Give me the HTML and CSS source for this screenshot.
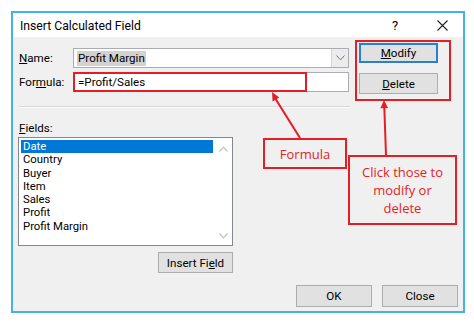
FILE: index.html
```html
<!DOCTYPE html>
<html>
<head>
<meta charset="utf-8">
<link rel="stylesheet" href="styles.css">
</head>
<body>
<div class="page">
  <div class="dialog">
    <div class="titlebar">
      <span class="title">Insert Calculated Field</span>
      <span class="help">?</span>
      <span class="close">
        <svg width="11" height="11" viewBox="0 0 11 11"><path d="M0.5 0.5 L10.5 10.5 M10.5 0.5 L0.5 10.5" stroke="#222" stroke-width="1.1" fill="none"/></svg>
      </span>
    </div>
    <div class="body">
      <div class="top">
        <div class="form">
          <div class="row">
            <span class="lbl"><u>N</u>ame:</span>
            <div class="combo">
              <span class="sel">Profit Margin</span>
              <span class="drop"><svg width="9" height="6" viewBox="0 0 9 6"><path d="M0.5 0.5 L4.5 4.8 L8.5 0.5" stroke="#777" stroke-width="1" fill="none"/></svg></span>
            </div>
          </div>
          <div class="row">
            <span class="lbl">For<u>m</u>ula:</span>
            <div class="input">=Profit/Sales</div>
          </div>
        </div>
        <div class="side">
          <button class="btn modify"><u>M</u>odify</button>
          <button class="btn delete"><u>D</u>elete</button>
        </div>
      </div>
      <div class="sep"></div>
      <div class="fields-label"><u>F</u>ields:</div>
      <div class="listbox">
        <ul class="list">
          <li class="active">Date</li>
          <li>Country</li>
          <li>Buyer</li>
          <li>Item</li>
          <li>Sales</li>
          <li>Profit</li>
          <li>Profit Margin</li>
        </ul>
        <div class="scroll">
          <svg width="9" height="6" viewBox="0 0 9 6"><path d="M0.5 5.5 L4.5 1.2 L8.5 5.5" stroke="#c2c2c2" stroke-width="1.2" fill="none"/></svg>
          <svg width="9" height="6" viewBox="0 0 9 6"><path d="M0.5 0.5 L4.5 4.8 L8.5 0.5" stroke="#c2c2c2" stroke-width="1.2" fill="none"/></svg>
        </div>
      </div>
      <div class="insert-row">
        <button class="btn insert">Insert Fi<u>e</u>ld</button>
      </div>
      <div class="footer">
        <button class="btn foot">OK</button>
        <button class="btn foot">Close</button>
      </div>
    </div>
  </div>

  <div class="hl hl-formula"></div>
  <div class="hl hl-buttons"></div>
  <div class="callout callout-formula">Formula</div>
  <div class="callout callout-click">Click those to<br>modify or<br>delete</div>
  <svg class="arrows" width="474" height="324" viewBox="0 0 474 324">
    <line x1="300" y1="138" x2="275" y2="98" stroke="#e41e26" stroke-width="2"/>
    <polygon points="272,92 279.2,97.4 272.6,101.4" fill="#e41e26"/>
    <line x1="386" y1="155" x2="384.3" y2="107" stroke="#e41e26" stroke-width="2"/>
    <polygon points="384,100 388,108 380.4,108.2" fill="#e41e26"/>
  </svg>
</div>
</body>
</html>
```
FILE: styles.css
```css
* { box-sizing: border-box; }
html, body { margin: 0; padding: 0; background: #fff; }
.page {
  position: relative;
  width: 474px;
  height: 324px;
  padding: 11px 0 0 11px;
  font-family: Roboto, "Open Sans", sans-serif;
  font-size: 11.6px;
  color: #000;
}
.dialog {
  width: 454px;
  height: 302px;
  border: 2px solid #45b2e6;
  background: #f0f0f0;
  display: flex;
  flex-direction: column;
}
.titlebar {
  height: 24px;
  background: #fff;
  display: flex;
  align-items: center;
  padding-left: 7px;
}
.title { flex: 1; font-size: 12.2px; padding-top: 1px; }
.help { width: 20px; text-align: center; font-size: 13px; margin-right: 16px; padding-top: 1px; }
.close { width: 42px; display: flex; justify-content: center; padding-top: 1px; }

.body { flex: 1; padding: 6px 5px 0 6px; }
.top { display: flex; gap: 10px; height: 51px; }
.form { width: 330px; padding-top: 5px; display: flex; flex-direction: column; gap: 4px; }
.row { display: flex; align-items: center; height: 20px; }
.lbl { width: 54px; }
.combo {
  width: 276px; height: 20px;
  border: 1px solid #abadb3; background: #fff;
  display: flex; align-items: center; padding-left: 3px;
}
.sel { background: #d2d2d2; padding: 0 1px; line-height: 15px; }
.drop {
  margin-left: auto; width: 17px; height: 18px;
  border-left: 1px solid #d4d4d4; background: #ececec;
  display: flex; align-items: center; justify-content: center;
}
.input {
  width: 276px; height: 20px;
  border: 1px solid #abadb3; background: #fff;
  padding-left: 4px; line-height: 18px;
}
.side { width: 79px; display: flex; flex-direction: column; gap: 10px; }
.btn {
  font: inherit; color: #000;
  background: #e1e1e1; border: 1px solid #adadad;
  padding: 0; margin: 0;
}
.modify { height: 20px; border: 2px solid #2a7fd0; }
.delete { height: 21px; }

.sep { margin-top: 12px; width: 331px; height: 2px; border-top: 1px solid #d9d9d9; border-bottom: 1px solid #fbfbfb; }
.fields-label { margin-top: 12px; line-height: 16px; height: 16px; }
.listbox {
  margin-top: 1px; margin-left: -1px;
  width: 215px; height: 109px;
  border: 1px solid #828790; background: #fff;
  display: flex;
}
.list { flex: 1; list-style: none; margin: 0; padding: 2px 1px 0 2px; font-size: 11.3px; }
.list li { height: 13.25px; line-height: 13.25px; padding-left: 2px; }
.list li.active { background: #0078d7; color: #fff; }
.scroll {
  width: 18px;
  display: flex; flex-direction: column; justify-content: space-between; align-items: center;
  padding: 8px 0 6px;
}
.insert-row { width: 215px; margin-left: -1px; margin-top: 6px; display: flex; justify-content: flex-end; }
.insert { width: 75px; height: 21px; }
.footer { display: flex; justify-content: flex-end; gap: 10px; margin-top: 12px; }
.foot { width: 76px; height: 22px; }

.hl { position: absolute; border: 2px solid #e41e26; }
.hl-formula { left: 73px; top: 72px; width: 234px; height: 20px; }
.hl-buttons { left: 355px; top: 40px; width: 96px; height: 61px; }
.callout {
  position: absolute; border: 2px solid #e41e26; color: #e41e26;
  font-family: "Open Sans", sans-serif;
  font-size: 13px; text-align: center;
  display: flex; align-items: center; justify-content: center;
}
.callout-formula { left: 263px; top: 138px; width: 84px; height: 31px; }
.callout-click { left: 348px; top: 155px; width: 109px; height: 70px; line-height: 18px; }
.arrows { position: absolute; left: 0; top: 0; pointer-events: none; }
```
